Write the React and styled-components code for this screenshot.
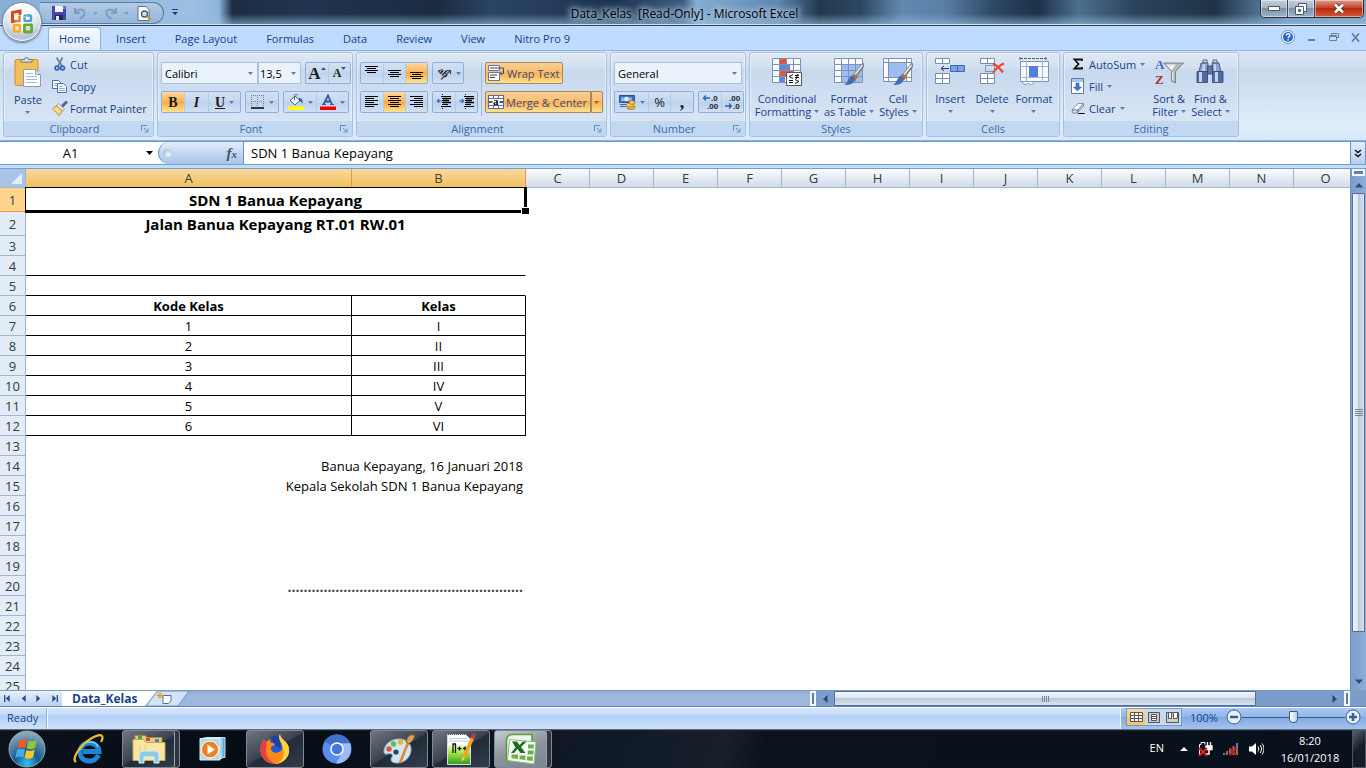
import React from 'react';
import styled, { createGlobalStyle } from 'styled-components';

const GlobalStyle = createGlobalStyle`
  * {
    box-sizing: border-box;
  }
  body {
    margin: 0;
    overflow: hidden;
  }
  button,
  input,
  select {
    margin: 0;
    padding: 0;
    border: 0;
    background: none;
    font: inherit;
    color: inherit;
    outline: none;
  }
  svg {
    display: block;
    flex: none;
  }
`;

const Desktop = styled.div`
  display: flex;
  flex-direction: column;
  height: 100vh;
  min-width: 0;
  background: #bfdbff;
  font-family: 'Open Sans', 'Noto Sans', sans-serif;
  font-size: 11px;
  line-height: 13px;
  color: #15428b;
`;

/* ---------- title bar ---------- */

const TitleBar = styled.header`
  position: relative;
  flex: none;
  display: flex;
  align-items: flex-start;
  justify-content: space-between;
  height: 26px;
  padding-left: 40px;
  border-bottom: 1px solid #33404f;
  box-shadow: inset 0 -1px 0 #cfe6f8;
  background:
    linear-gradient(rgba(190, 220, 245, 0) 55%, rgba(150, 190, 225, 0.65)),
    linear-gradient(
      90deg,
      #88b0d6 0,
      #9cc0e2 14%,
      #8fb6da 16%,
      #1c2c44 17%,
      #22344f 22%,
      #1b2b42 32%,
      #2b4464 36%,
      #1f3350 45%,
      #3d5c7f 50%,
      #86aed2 51%,
      #5f86ad 57%,
      #22384f 60%,
      #2d4763 63%,
      #6389b0 66%,
      #5b80a6 69%,
      #2b4562 73%,
      #1d3149 76%,
      #4d708f 79%,
      #2a435c 83%,
      #1f3347 89%,
      #6c93b8 94%,
      #7ba3c8
    );
`;

const OfficeButton = styled.button`
  position: absolute;
  top: 2px;
  left: 2px;
  z-index: 2;
  width: 40px;
  height: 40px;
  display: grid;
  place-items: center;
  border: 1px solid #7b8da5;
  border-radius: 50%;
  background: radial-gradient(circle at 50% 20%, #fff 20%, #dbe2ec 55%, #b5c3d6 75%, #eef3f9);
  box-shadow: inset 0 0 0 1px #fff, 0 1px 2px rgba(20, 40, 80, 0.5);
`;

const QuickAccess = styled.div`
  display: flex;
  align-items: center;
  gap: 3px;
  height: 22px;
  margin-top: 2px;
  padding: 0 7px 0 11px;
  border: 1px solid #5c7a9d;
  border-left: 0;
  border-radius: 0 11px 11px 0;
  background: linear-gradient(#b3cbe6, #93b5da);
`;

const QuickButton = styled.button`
  display: grid;
  place-items: center;
  width: ${(props) => props.$width || 16}px;
  height: ${(props) => props.$height || 18}px;
`;

const TitleSide = styled.div`
  flex: 1 1 0;
  display: flex;
  justify-content: ${(props) => (props.$end ? 'flex-end' : 'flex-start')};
  align-items: flex-start;
  gap: 3px;
`;

const WindowTitle = styled.h1`
  flex: none;
  margin: 0;
  padding: 7px 37px 0 0;
  font-size: 12px;
  font-weight: 400;
  line-height: 14px;
  white-space: pre;
  color: #000;
  text-shadow: 0 0 5px #a9c3dc, 0 0 6px #a9c3dc, 0 0 8px #a9c3dc, 0 0 10px #a9c3dc;
`;

const WindowButtons = styled.div`
  display: flex;
  height: 18px;
  margin-right: 2px;
  overflow: hidden;
  border: 1px solid #24323f;
  border-top: 0;
  border-radius: 0 0 5px 5px;
`;

const WindowButton = styled.button`
  display: grid;
  place-items: center;
  width: ${(props) => (props.$close ? 48 : 27)}px;
  border-right: ${(props) => (props.$close ? '0' : '1px solid #34475a')};
  box-shadow: inset 0 0 0 1px rgba(255, 255, 255, 0.45);
  background: ${(props) =>
    props.$close
      ? 'linear-gradient(#dd9c8e, #c6452c 45%, #b32a12 50%, #d65a35)'
      : 'linear-gradient(#c3cfdb, #a5b5c6 45%, #7d92a7 50%, #9db4ca)'};
`;

/* ---------- tabs ---------- */

const TabBar = styled.nav`
  flex: none;
  display: flex;
  align-items: flex-end;
  gap: 1px;
  height: 24px;
  padding-left: 48px;
  background: #bfdbff;
`;

const RibbonTab = styled.button`
  height: 23px;
  border: 1px solid ${(props) => (props.$active ? '#8db2e3' : 'transparent')};
  border-bottom: 0;
  border-radius: 3px 3px 0 0;
  font-size: 11px;
  color: #15428b;
  white-space: nowrap;
  background: ${(props) => (props.$active ? 'linear-gradient(#f5faff, #dfebf8)' : 'none')};

  && {
    padding: ${(props) => (props.$active ? '0 10px 2px' : '0 13px 2px')};
  }
`;

const TabBarEnd = styled.div`
  display: flex;
  align-items: center;
  align-self: center;
  gap: 12px;
  margin: 0 5px 2px auto;
`;

const IconButton = styled.button`
  display: grid;
  place-items: center;
`;

/* ---------- ribbon ---------- */

const Ribbon = styled.section`
  flex: none;
  display: flex;
  gap: 3px;
  height: 91px;
  padding: 1px 3px 3px;
  border: solid #8db2e3;
  border-width: 1px 0;
  background: linear-gradient(#dbe6f4 0, #cfdded 18%, #c9d9ed 20%, #e0edfb 85%, #d3e9fb);
`;

const GroupBox = styled.section`
  flex: none;
  display: flex;
  flex-direction: column;
  width: ${(props) => props.$width}px;
  border: 1px solid #a6c1e0;
  border-radius: 3px;
  box-shadow: inset 0 0 0 1px rgba(255, 255, 255, 0.45);
  background: linear-gradient(#dfe9f5 0, #d3e0f0 18%, #c8d8ed 20%, #dbe8f7);
`;

const GroupBody = styled.div`
  flex: 1;
  display: flex;
  gap: ${(props) => props.$gap || 0}px;
  padding: ${(props) => props.$pad || '9px 3px 0'};
`;

const GroupLabel = styled.div`
  display: flex;
  align-items: center;
  height: 15px;
  padding: 0 4px;
  border-radius: 0 0 2px 2px;
  background: #c1d8f0;
  color: #3e6aaa;

  h2 {
    flex: 1;
    margin: 0;
    font-size: 11px;
    font-weight: 400;
    text-align: center;
  }
`;

const Column = styled.div`
  display: flex;
  flex-direction: column;
  gap: ${(props) => props.$gap || 0}px;
`;

const Row = styled.div`
  display: flex;
  gap: 4px;
`;

const SelectPair = styled.div`
  display: flex;
`;

const Separator = styled.div`
  width: 2px;
  height: 54px;
  border-left: 1px solid #a0bce0;
  background: #eef5fc;
`;

const BigButton = styled.button`
  display: flex;
  flex-direction: column;
  align-items: center;
  width: ${(props) => props.$width}px;
  height: 66px;
  gap: 5px;
  text-align: center;
  white-space: nowrap;

  && {
    padding-top: 4px;
  }
`;

const BigLabel = styled.span`
  display: flex;
  flex-direction: column;
  align-items: center;
`;

const CaretLine = styled.span`
  display: flex;
  align-items: center;
  justify-content: center;
  gap: 3px;
  min-height: 13px;
`;

const SmallButton = styled.button`
  display: flex;
  align-items: center;
  gap: ${(props) => props.$gap || 4}px;
  height: 22px;
  white-space: nowrap;
`;

const EditList = styled.div`
  width: 79px;
`;

const ButtonGroup = styled.div`
  display: flex;
  height: 22px;
  border: 1px solid #8fb0dc;
  border-radius: 2px;
  background: linear-gradient(#d3e1f3, #c5d7ee 50%, #bdd1ec 50%, #d0e0f4);

  button + button {
    border-left: 1px solid #b4cbe7;
  }
`;

const ToolButton = styled.button`
  display: flex;
  align-items: center;
  justify-content: center;
  gap: 4px;
  width: ${(props) => props.$width || 22}px;
  white-space: nowrap;
  background: ${(props) =>
    props.$on ? 'linear-gradient(#fcd7a4, #fbb65b 45%, #fda93f 50%, #fee591)' : 'none'};
`;

const Superscript = styled.span`
  align-self: flex-start;
  margin: 3px 0 0 -4px;
`;

const ToggleButton = styled.button`
  display: flex;
  align-items: center;
  gap: 2px;
  height: 22px;
  border-radius: 2px;
  color: #3a4a80;
  white-space: nowrap;
  background: linear-gradient(#f8cd95, #fbc071 45%, #fbb04f 50%, #fee08f);

  && {
    padding: 0 3px 0 2px;
    border: 1px solid #a38a5c;
  }
`;

const ToggleSplit = styled.div`
  display: flex;

  button:first-child {
    border-radius: 2px 0 0 2px;
  }
  button:last-child {
    border-radius: 0 2px 2px 0;
  }
`;

const SelectBox = styled.label`
  position: relative;
  display: flex;
  align-items: center;
  width: ${(props) => props.$width}px;
  height: 22px;
  border: 1px solid #abc1de;
  background: #eaf2fb;
  color: #000;

  select {
    flex: 1;
    height: 20px;
    padding-left: ${(props) => (props.$tight ? 1 : 3)}px;
    appearance: none;
  }
  svg {
    position: absolute;
    right: 4px;
    pointer-events: none;
  }
`;

const Glyph = styled.span`
  font-family: 'Liberation Serif', serif;
  font-size: ${(props) => props.$size || 14}px;
  font-weight: 700;
  font-style: ${(props) => (props.$italic ? 'italic' : 'normal')};
  text-decoration: ${(props) => (props.$underline ? 'underline' : 'none')};
  color: #1b1b1b;
`;

const Percent = styled.span`
  font-size: 13px;
  color: #1b1b1b;
`;

/* ---------- formula bar ---------- */

const FormulaBar = styled.div`
  flex: none;
  display: flex;
  height: 24px;
  margin-bottom: 3px;
  border-top: 1px solid #6f94c4;
  border-bottom: 1px solid #7b9ebd;
  background: #fff;
  font-size: 13px;
  line-height: 20px;
  color: #000;
`;

const NameBox = styled.div`
  display: flex;
  align-items: center;
  width: 158px;

  input {
    flex: 1;
    min-width: 0;
    padding-left: 1px;
    text-align: center;
  }
  button {
    width: 18px;
    height: 20px;
    display: grid;
    place-items: center;
  }
`;

const FxArea = styled.div`
  display: flex;
  align-items: center;
  justify-content: space-between;
  width: 86px;
  padding: 0 6px 0 4px;
  border: 1px solid #6f94c4;
  border-width: 0 1px;
  border-radius: 11px 0 0 11px;
  background: linear-gradient(#e4eefb, #bcd2f0 60%, #a9c5ea);
`;

const Knob = styled.span`
  width: 9px;
  height: 9px;
  border-radius: 50%;
  background: radial-gradient(circle at 60% 60%, #f4f8fd, #94abc8);
`;

const FxButton = styled.button`
  font-family: 'Liberation Serif', serif;
  font-size: 15px;
  font-style: italic;
  font-weight: 700;
  color: #44546a;

  small {
    font-size: 11px;
  }
`;

const FormulaInput = styled.input`
  flex: 1;
  min-width: 0;

  && {
    padding-left: 7px;
  }
`;

const ExpandButton = styled.button`
  width: 16px;
  display: grid;
  place-items: center;

  && {
    border: 1px solid #6f94c4;
    border-width: 0 1px;
    background: linear-gradient(#e3edfb, #b5cdee);
  }
`;

/* ---------- sheet ---------- */

const SheetArea = styled.main`
  flex: 1;
  min-height: 0;
  display: flex;
  border-top: 1px solid #7b9ebd;
  background: #fff;
`;

const GridClip = styled.div`
  flex: 1;
  min-width: 0;
  overflow: hidden;
`;

const Grid = styled.table`
  width: 1358px;
  table-layout: fixed;
  border-collapse: separate;
  border-spacing: 0;
  font-size: 13px;
  line-height: 17px;
  color: #000;

  th,
  td {
    padding: 2px 0 0;
    font-weight: 400;
  }
`;

const Col = styled.col`
  width: ${(props) => props.$width}px;
`;

const CornerCell = styled.th`
  height: 19px;
  border-right: 1px solid #9eb6ce;
  border-bottom: 1px solid #9eb6ce;
  background: #a9c4e9;

  && {
    padding: 0;
  }
  svg {
    margin-left: auto;
  }
`;

const ColHead = styled.th`
  height: 19px;
  border-right: 1px solid ${(props) => (props.$on ? '#f29536' : '#9eb6ce')};
  border-bottom: 1px solid ${(props) => (props.$on ? '#c5923c' : '#9eb6ce')};
  background: ${(props) =>
    props.$on ? 'linear-gradient(#f9d99f, #f1c15f)' : 'linear-gradient(#f9fcfd, #d3dbe9)'};
  color: ${(props) => (props.$on ? '#40423a' : '#27413e')};

  && {
    padding: 1px 0 0;
  }
`;

const RowHead = styled.th`
  height: ${(props) => props.$height}px;
  border-right: 1px solid ${(props) => (props.$on ? '#f29536' : '#9eb6ce')};
  border-bottom: 1px solid ${(props) => (props.$on ? '#f29536' : '#9eb6ce')};
  background: ${(props) => (props.$on ? '#ffd58d' : '#e4ecf7')};
  color: #27413e;
`;

const Cell = styled.td`
  position: relative;
  border-right: 1px solid ${(props) => (props.$right ? '#000' : 'transparent')};
  border-bottom: 1px solid ${(props) => (props.$bottom ? '#000' : 'transparent')};
  text-align: ${(props) => props.$align || 'center'};
  white-space: nowrap;
  color: ${(props) => (props.$dots ? '#444' : '#000')};

  && {
    padding: 2px 2px 0;
    font-size: ${(props) => props.$size || 13}px;
    font-weight: ${(props) => (props.$bold ? 700 : 400)};
  }
`;

const Selection = styled.div`
  position: absolute;
  inset: -1px -2px -2px -1px;
  border: solid #000;
  border-width: 1px 3px 3px 1px;

  &::after {
    content: '';
    position: absolute;
    right: -5px;
    bottom: -4px;
    width: 7px;
    height: 6px;
    border: solid #fff;
    border-width: 1px 0 0 1px;
    background: #000;
  }
`;

/* ---------- scroll bars ---------- */

const VScroll = styled.div`
  flex: none;
  display: flex;
  flex-direction: column;
  width: 16px;
  padding: 0 1px;
  border-left: 1px solid #6f94c4;
  background: linear-gradient(90deg, #7c9cc9, #8dadd8);
`;

const VSplit = styled.div`
  height: 7px;
  border: 2px solid #f3f8fe;
  background: #5b7fae;
`;

const ScrollArrow = styled.button`
  display: grid;
  place-items: center;
  width: ${(props) => props.$width || 14}px;
  height: ${(props) => props.$height || 17}px;
`;

const Thumb = styled.div`
  display: grid;
  place-items: center;
  border: 1px solid #4f6f9f;
  border-radius: 1px;
  background: linear-gradient(
    ${(props) => (props.$vertical ? '90deg' : '180deg')},
    #f3f6fb,
    #dfe5ee 45%,
    #bcc8da 50%,
    #dbe3ef
  );
  flex: ${(props) => props.$grow} 1 0;
`;

const Track = styled.div`
  flex: ${(props) => props.$grow} 1 0;
`;

const SheetTabs = styled.div`
  flex: none;
  display: flex;
  height: 17px;
  border-top: 1px solid #7b9ebd;
  border-bottom: 1px solid #5f82b4;
  background: linear-gradient(#8fabd5, #9fb8dd 30%, #9db6dc);
`;

const TabNav = styled.div`
  display: flex;
  align-items: center;
  justify-content: space-around;
  width: 62px;
  background: linear-gradient(#e7f1fd, #b9d0ef);
`;

const SheetTab = styled.button`
  height: 15px;
  background: #fff;
  font-size: 12px;
  font-weight: 700;
  line-height: 15px;
  color: #15428b;

  && {
    padding: 0 6px 0 10px;
  }
`;

const HScroll = styled.div`
  display: flex;
  width: 556px;
  margin-left: auto;
  padding-right: 16px;
  background: #7c9cc9;
`;

const HSplit = styled.div`
  width: 6px;
  border: 2px solid #f3f8fe;
  background: #5b7fae;
`;

/* ---------- status bar ---------- */

const StatusBar = styled.footer`
  flex: none;
  display: flex;
  height: 22px;
  border-top: 1px solid #fff;
  background: linear-gradient(#d5e5fa 0, #c8dcf8 30%, #b0cef7 34%, #cfe1f9);
  color: #15428b;
`;

const ReadyText = styled.div`
  display: flex;
  align-items: center;
  width: 47px;
  padding: 0 0 3px 7px;
  border-right: 1px solid #8fb2e0;
  box-shadow: 1px 0 0 #f2f8ff;
`;

const ViewArea = styled.div`
  display: flex;
  align-items: center;
  gap: 8px;
  width: 246px;
  margin-left: auto;
  padding: 0 5px 3px;
  border-left: 1px solid #f2f8ff;
  background: linear-gradient(#a9c8f3 0, #94b8ea 40%, #82a9df 45%, #a3c4f2);
`;

const ViewButtons = styled.div`
  display: flex;
  border: 1px solid #7797c4;
`;

const ViewButton = styled.button`
  display: grid;
  place-items: center;
  width: 18px;
  height: 16px;
  background: ${(props) => (props.$on ? 'linear-gradient(#fdd79a, #fdc05c)' : '#c5d9f3')};
`;

const ZoomArea = styled.div`
  flex: 1;
  min-width: 0;
  display: flex;
  align-items: center;

  input {
    flex: 1;
    min-width: 0;
    height: 16px;
    appearance: none;
    background: linear-gradient(#3c5c8c, #3c5c8c) center / 100% 1px no-repeat;
  }
  input::-webkit-slider-thumb {
    appearance: none;
    width: 9px;
    height: 12px;
    border: 1px solid #3c5c8c;
    border-radius: 1px 1px 4px 4px;
    background: linear-gradient(90deg, #fff, #b9cde8);
  }
`;

/* ---------- task bar ---------- */

const Taskbar = styled.div`
  flex: none;
  display: flex;
  align-items: stretch;
  height: 39px;
  border-top: 1px solid #5d6a78;
  box-shadow: inset 0 1px 0 #1a232e;
  background: linear-gradient(
    100deg,
    #0b121c 0,
    #060c14 20%,
    #101a26 45%,
    #161f2a 53%,
    #0a121d 56%,
    #07101b 100%
  );
  color: #fff;
`;

const StartButton = styled.button`
  width: 54px;
  display: grid;
  place-items: center;
`;

const TaskList = styled.div`
  display: flex;
  gap: 4px;
  margin-left: 6px;
`;

const TaskButton = styled.button`
  display: grid;
  place-items: center;
  width: 58px;
  border-radius: 3px;
  border: 1px solid ${(props) => (props.$open ? '#7f8994' : 'transparent')};
  background: ${(props) => {
    if (props.$active) return 'linear-gradient(160deg, #c5cbd2, #8b939d 50%, #7a828d)';
    return props.$open ? 'linear-gradient(150deg, #6e7681, #3a434f 48%, #222b38 52%, #333d4b)' : 'none';
  }};
  box-shadow: ${(props) =>
    props.$stacked ? 'inset -4px 0 0 #2c3540, inset -5px 0 0 #9aa3ad' : 'none'};

  && {
    padding-right: ${(props) => (props.$stacked ? 5 : 0)}px;
  }
`;

const Tray = styled.div`
  display: flex;
  align-items: center;
  gap: 10px;
  margin-left: auto;
  font-size: 11px;
`;

const Language = styled.span`
  padding-bottom: 4px;
  margin-right: 6px;
`;

const Clock = styled.time`
  width: 64px;
  margin-left: 4px;
  line-height: 17px;
  text-align: center;
`;

const ShowDesktop = styled.button`
  width: 14px;
  height: 38px;
  border: 1px solid #4b5560;
  background: linear-gradient(135deg, #56606b, #161d27 50%);
`;

/* ---------- icons ---------- */

const Caret = ({ color = '#5a7fb5' }) => (
  <svg width="5" height="3" viewBox="0 0 5 3">
    <path d="M0 0h5L2.5 3z" fill={color} />
  </svg>
);

const Arrow = ({ dir, color = '#2b4a80', size = 8, bar = false }) => {
  const turn = { left: 0, up: 90, right: 180, down: 270 }[dir];
  return (
    <svg width={size} height={size} viewBox="0 0 8 8">
      <g transform={`rotate(${turn} 4 4)`} fill={color}>
        <path d="M6.5 0v8L2 4z" />
        {bar && <path d="M0 0h1.5v8H0z" />}
      </g>
    </svg>
  );
};

const OfficeLogo = () => (
  <svg width="26" height="26" viewBox="0 0 26 26" fill="none">
    <path d="M8 12.500H3.500V3.500L11 2v4" stroke="#d9471b" strokeWidth="3" />
    <path d="M10.500 6.500v5.500H6" stroke="#ee7a33" strokeWidth="2.500" />
    <rect x="15.500" y="6.500" width="6.500" height="5.500" rx="1" stroke="#4b9fd8" strokeWidth="2.400" />
    <path d="M14.500 8.500l4-2" stroke="#9fd0f2" strokeWidth="1.200" />
    <rect x="5" y="16" width="6" height="6.500" rx="1" stroke="#f2b01e" strokeWidth="2.600" />
    <rect x="15.500" y="15.500" width="7" height="7.500" rx="1" stroke="#6aa83a" strokeWidth="3" />
    <path d="M16 19h6" stroke="#b6dc8c" strokeWidth="1" />
    <path d="M13 5v17M5 14h17" stroke="#fff" strokeWidth="1" />
  </svg>
);

const SaveIcon = () => (
  <svg width="14" height="14" viewBox="0 0 14 14">
    <path d="M0 0h13l1 1v13H0z" fill="#4747a8" />
    <path d="M3 0h8v6H3z" fill="#f1f4fb" />
    <path d="M11 1h2v2h-2z" fill="#8f8fe0" />
    <path d="M3 9h8v5H3z" fill="#23235e" />
    <path d="M4 10h3v4H4z" fill="#e6e9f5" />
  </svg>
);

const UndoIcon = ({ flip }) => (
  <svg width="14" height="14" viewBox="0 0 14 14">
    <g transform={flip ? 'translate(14 0) scale(-1 1)' : undefined} fill="none" stroke="#7f9cc4">
      <path d="M2 2v5h5" strokeWidth="2" />
      <path d="M2.500 6.500C6 2 12 3 11.500 7.500 11 10.500 8 12 6.500 12.500" strokeWidth="2" />
    </g>
  </svg>
);

const PreviewIcon = () => (
  <svg width="15" height="15" viewBox="0 0 15 15">
    <path d="M1 .5h8l3 3v11H1z" fill="#fff" stroke="#5e6f88" />
    <circle cx="7.500" cy="8" r="3" fill="#cfe5f8" stroke="#46586f" strokeWidth="1.300" />
    <path d="M10 10.500l4 3.500" stroke="#d9901c" strokeWidth="2" />
  </svg>
);

const MoreIcon = () => (
  <svg width="6" height="7" viewBox="0 0 6 7">
    <path d="M0 0h6v1H0zM0 3h6L3 6z" fill="#1b3d7a" />
  </svg>
);

const HelpIcon = () => (
  <svg width="14" height="14" viewBox="0 0 14 14">
    <circle cx="7" cy="7" r="6.500" fill="#fff" stroke="#6f8fc0" />
    <circle cx="7" cy="7" r="5" fill="#2a62d4" />
    <path
      d="M5.200 5.500c0-2.300 3.700-2.200 3.700 0 0 1.300-1.800 1.300-1.800 2.700M7.100 9.200v1.400"
      stroke="#fff"
      strokeWidth="1.400"
      fill="none"
    />
  </svg>
);

const LauncherIcon = () => (
  <svg width="8" height="8" viewBox="0 0 8 8" fill="none" stroke="#6a8cba">
    <path d="M.5 6V.5H6" />
    <path d="M3 3l3 3M7 3.500V7H3.500" />
  </svg>
);

const PasteIcon = () => (
  <svg width="28" height="31" viewBox="0 0 28 31">
    <rect x="1" y="2.500" width="23" height="26" rx="1.500" fill="#f3bf5a" stroke="#c98f2c" />
    <path d="M7 5V2.500h3.500a2 2 0 0 1 4 0H18V5z" fill="#dfe3e8" stroke="#6d7682" />
    <path d="M9.500 12.500h12l5 5v12h-17z" fill="#fdfeff" stroke="#8a9cb8" />
    <path d="M21.500 12.500v5h5" fill="#d9e4f3" stroke="#8a9cb8" />
    <path d="M12 16.500h7M12 19.500h11M12 22.500h11M12 25.500h11" stroke="#a7b9d4" />
  </svg>
);

const CutIcon = () => (
  <svg width="16" height="16" viewBox="0 0 16 16" fill="none">
    <path d="M4.500 1.500L10 10M10.500 1.500L6 10" stroke="#6b7d9b" strokeWidth="1.700" />
    <circle cx="5" cy="12" r="1.900" stroke="#2f62b5" strokeWidth="1.700" />
    <circle cx="10.500" cy="12" r="1.900" stroke="#2f62b5" strokeWidth="1.700" />
  </svg>
);

const CopyIcon = () => (
  <svg width="16" height="16" viewBox="0 0 16 16" stroke="#4a73b5" fill="#fff">
    <path d="M.5 2.500h6l2 2v6h-8z" />
    <path d="M2 5.500h4M2 7.500h4" stroke="#8fb0dd" />
    <path d="M5.500 5.500h6l3 3v6h-9z" />
    <path d="M7 8.500h4M7 10.500h6M7 12.500h6" stroke="#8fb0dd" />
  </svg>
);

const PainterIcon = () => (
  <svg width="16" height="16" viewBox="0 0 16 16">
    <path d="M15 1.500L10 6.500" stroke="#5b5f9c" strokeWidth="3" />
    <path d="M6.500 3.500l6 5.500-2 2-6-5.300z" fill="#eceef3" stroke="#7b8394" strokeWidth=".7" />
    <path d="M4.500 6l6 5-3.500 4.500L.5 8.500z" fill="#f3cf5b" stroke="#a67c22" strokeWidth=".7" />
    <path d="M2.500 8.500l4.500 4M4 7.500l4.500 4" stroke="#fff3bf" />
  </svg>
);

const BorderIcon = () => (
  <svg width="14" height="14" viewBox="0 0 14 14" fill="none" stroke="#6c7f99" strokeDasharray="1 1">
    <path d="M.5 0v12M6.500 0v12M12.500 0v12M0 .5h13M0 6.500h13" />
    <path d="M0 13h13" stroke="#000" strokeDasharray="none" strokeWidth="1.500" />
  </svg>
);

const FillColorIcon = () => (
  <svg width="16" height="16" viewBox="0 0 16 16">
    <path d="M2 6.500L7 2l5 4.500-5 4.500z" fill="#eef3fa" stroke="#53637d" />
    <path d="M6.500 6V1.500a1.500 1.500 0 0 1 3 0" fill="none" stroke="#53637d" />
    <path d="M11 4c3 0 4 2 3.500 6-1-2-2-3-3.500-3z" fill="#2f5fb0" />
    <path d="M0 12.500h16V16H0z" fill="#ff0" />
  </svg>
);

const FontColorIcon = () => (
  <svg width="16" height="16" viewBox="0 0 16 16">
    <path d="M3.500 10.500L8 1.500l4 9M5.500 7.500h5" fill="none" stroke="#37559a" strokeWidth="1.800" />
    <path d="M2 10.500h4M10 10.500h4" stroke="#37559a" />
    <path d="M0 12.500h16V16H0z" fill="#f00000" />
  </svg>
);

const linePatterns = {
  top: [[1, 14, 1], [3, 12, 3], [1, 14, 5], [3, 12, 7]],
  middle: [[1, 14, 5], [3, 12, 7], [1, 14, 9], [3, 12, 11]],
  bottom: [[1, 14, 7], [3, 12, 9], [1, 14, 11], [3, 12, 13]],
  left: [[1, 14, 2], [1, 10, 4], [1, 14, 6], [1, 10, 8], [1, 14, 10], [1, 10, 12]],
  center: [[1, 14, 2], [3, 12, 4], [1, 14, 6], [3, 12, 8], [1, 14, 10], [3, 12, 12]],
  right: [[1, 14, 2], [5, 14, 4], [1, 14, 6], [5, 14, 8], [1, 14, 10], [5, 14, 12]],
  indent: [[5, 15, 2], [7, 15, 4], [7, 13, 6], [7, 15, 8], [7, 12, 10], [5, 15, 12]],
};

const LinesIcon = ({ kind, shift }) => (
  <svg width="16" height="16" viewBox="0 0 16 16">
    {linePatterns[kind].map(([from, to, y]) => (
      <path key={y} d={`M${from} ${y + 0.5}H${to}`} stroke="#000" strokeWidth={shift && y > 3 && y < 9 ? 1.5 : 1} />
    ))}
    {shift && <path d="M6.500 0v16" stroke="#000" strokeDasharray="1 1" />}
    {shift === 'out' && <path d="M3 5L.8 7 3 9zM2 7h4" fill="#3a70c8" stroke="#3a70c8" />}
    {shift === 'in' && <path d="M3 5l2.200 2L3 9zM0 7h4" fill="#3a70c8" stroke="#3a70c8" />}
  </svg>
);

const OrientationIcon = () => (
  <svg width="16" height="16" viewBox="0 0 16 16" overflow="visible">
    <text
      x="1"
      y="9"
      fontSize="10"
      fontWeight="700"
      fontFamily="Liberation Serif"
      transform="rotate(45 5 8)"
      fill="#222"
    >
      ab
    </text>
    <path d="M5 14.500L14.500 5.500M11 5.500h3.500V9" fill="none" stroke="#444" strokeWidth="1.200" />
  </svg>
);

const WrapIcon = () => (
  <svg width="17" height="16" viewBox="0 0 17 16">
    <path d="M.5.5h11v5H.5zM.5 7.500h11v8H.5z" fill="#fff" stroke="#5d79a8" />
    <path d="M2 3h11M2 10h7M2 12.500h5" stroke="#444" strokeWidth="1.200" />
    <path d="M13 3h2.500v5.500h-3M14 6.500l-2 2 2 2" fill="none" stroke="#35507f" />
  </svg>
);

const MergeIcon = () => (
  <svg width="16" height="16" viewBox="0 0 16 16">
    <path d="M.5 1.500h15v13H.5z" fill="#fff" stroke="#4d6ea8" />
    <path d="M5.500 1v3M10.500 1v3M5.500 12v3M10.500 12v3M0 4.500h16M0 11.500h16" stroke="#4d6ea8" />
    <path d="M1 8h3.500M11.500 8H15" stroke="#222" strokeWidth="1.500" />
    <text x="5" y="10.500" fontSize="11" fontWeight="700" fontFamily="Liberation Serif" fill="#000">
      a
    </text>
  </svg>
);

const MoneyIcon = () => (
  <svg width="17" height="16" viewBox="0 0 17 16">
    <path d="M.5 1.500h15v7H.5z" fill="#3f6fc0" stroke="#2b5292" />
    <path d="M2 3.500h11v3.500H2z" fill="#8fb4ea" />
    <circle cx="7.500" cy="5" r="2.300" fill="#e3edfa" />
    <path d="M1 10h8v1H1zM1 12h6v1H1z" fill="#3e66a8" />
    <ellipse cx="12" cy="13.500" rx="4" ry="2" fill="#f1b62c" stroke="#9b6a12" strokeWidth=".7" />
    <ellipse cx="11" cy="11" rx="4" ry="2" fill="#fbd05a" stroke="#9b6a12" strokeWidth=".7" />
    <ellipse cx="13" cy="8.500" rx="3" ry="1.800" fill="#fbd05a" stroke="#9b6a12" strokeWidth=".7" />
  </svg>
);

const DecimalIcon = ({ less }) => (
  <svg width="17" height="16" viewBox="0 0 17 16" fontFamily="Liberation Sans" fontSize="8" fontWeight="700">
    <text x={less ? 5 : 9} y="7" fill="#222">
      {less ? '.00' : '.0'}
    </text>
    <text x={less ? 9 : 5} y="15" fill="#222">
      {less ? '.0' : '.00'}
    </text>
    {less ? (
      <path d="M1 12h6M5 9.500L7.500 12 5 14.500" fill="none" stroke="#2f62c0" strokeWidth="1.300" />
    ) : (
      <path d="M8 4H2M4 1.500L1.500 4 4 6.500" fill="none" stroke="#2f62c0" strokeWidth="1.300" />
    )}
  </svg>
);

const GridLines = ({ w, h, stepX, stepY }) => {
  const d = [];
  for (let x = 0; x <= w; x += stepX) d.push(`M${x + 0.5} .5v${h}`);
  for (let y = 0; y <= h; y += stepY) d.push(`M.5 ${y + 0.5}h${w}`);
  return <path d={d.join('')} fill="none" stroke="#7e92b2" />;
};

const ConditionalIcon = () => (
  <svg width="30" height="30" viewBox="0 0 30 30">
    <path d="M0 1h28v24H0z" fill="#f8fafd" />
    <path d="M7 1h7v6H7zM7 13h14v6H7z" fill="#e8543a" />
    <path d="M7 7h11v6H7zM7 19h6v6H7z" fill="#5b87dd" />
    <g transform="translate(0 1)">
      <GridLines w={28} h={24} stepX={7} stepY={6} />
    </g>
    <path d="M14.500 15.500h15v13h-15z" fill="#fff" stroke="#555" />
    <path
      d="M21 17.500l-4 2 4 2M17 23.500h4M17 25.500h4M23 18.500h4M23 20.500h4M26 17l-2 5M23 22.500l4 2-4 2"
      fill="none"
      stroke="#111"
    />
  </svg>
);

const Brush = () => (
  <g>
    <path d="M29 8L20 20" stroke="#7c818c" strokeWidth="4" strokeLinecap="round" />
    <path d="M28.500 8L19.500 19.500" stroke="#e9ecf1" strokeWidth="1.500" />
    <path d="M20 16.500l4 3.500-3 3.500-4.500-4z" fill="#b9722a" />
    <path d="M17 19c3 0 4.500 2 3.500 4.500-2 4-6 4.500-10.500 4.500 4-2 4-7 7-9z" fill="#3f6cb8" />
  </g>
);

const FormatTableIcon = () => (
  <svg width="30" height="30" viewBox="0 0 30 30">
    <path d="M0 1h28v24H0z" fill="#f8fafd" />
    <path d="M7 7h21v18H7z" fill="#9dbcf3" />
    <g transform="translate(0 1)">
      <GridLines w={28} h={24} stepX={7} stepY={6} />
    </g>
    <Brush />
  </svg>
);

const CellStylesIcon = () => (
  <svg width="30" height="30" viewBox="0 0 30 30">
    <path d="M.5 1.500h28v23H.5z" fill="#f8fafd" stroke="#7e92b2" />
    <path d="M5.500 1v24M23.500 1v24M0 5.500h28M0 20.500h28" stroke="#7e92b2" />
    <path d="M6 6h17v14H6z" fill="#9dbcf3" />
    <Brush />
  </svg>
);

const InsertCellsIcon = () => (
  <svg width="30" height="30" viewBox="0 0 30 30" fill="#fff" stroke="#7e8da6">
    <path d="M.5 1.500h14v5H.5zM7.500 1.500v5M.5 16.500h14v10H.500zM7.500 16.500v10M.5 21.500h14" />
    <path d="M15.500 8.500h14v6h-14z" fill="#7da3ea" stroke="#3f66b3" />
    <path d="M22.500 8.500v6" stroke="#3f66b3" />
    <path d="M14 11.500H6M9 9l-3 2.500L9 14" fill="none" stroke="#2a3a55" />
  </svg>
);

const DeleteCellsIcon = () => (
  <svg width="30" height="30" viewBox="0 0 30 30" fill="#fff" stroke="#7e8da6">
    <path d="M3.500 1.500h14v5h-14zM10.500 1.500v5M3.500 16.500h14v10h-14zM10.500 16.500v10M3.500 21.500h14" />
    <path d="M8.500 8.500h9v6h-9z" fill="none" stroke="#2f4f93" strokeDasharray="1 1" />
    <path d="M16 6.500c4 2 7 5 10 9M27 6.500c-5 2-8 5-11 9.500" stroke="#ea4a35" strokeWidth="2.200" fill="none" />
  </svg>
);

const FormatCellsIcon = () => (
  <svg width="30" height="30" viewBox="0 0 30 30">
    <path d="M1 1.500h26M1 0v4M27 0v4" stroke="#4c5d7b" strokeDasharray="3 1" />
    <path d="M1.500 4.500h28v20h-28z" fill="#f8fafd" stroke="#7e92b2" />
    <path d="M7.500 4v21M23.500 4v21M1 9.500h28M1 20.500h28" stroke="#a6b5cc" />
    <path d="M10 9h9v11h-9z" fill="#4f7de0" />
    <path d="M3 25c1 3 5 3 6 1 2 2 5 2 6-1" fill="#fff" stroke="#7e92b2" />
  </svg>
);

const SigmaIcon = () => (
  <svg width="14" height="14" viewBox="0 0 14 14">
    <path d="M11 4V2.500H3.500L7.500 7l-4 4.500H11V10" fill="none" stroke="#111" strokeWidth="1.800" />
  </svg>
);

const FillIcon = () => (
  <svg width="14" height="16" viewBox="0 0 14 16">
    <path d="M.5.5h12v15H.5z" fill="#fff" stroke="#5d79a8" />
    <path d="M1 1h11v3H1z" fill="#a9c4ee" />
    <path d="M5 5h3v4h2.500l-4 4-4-4H5z" fill="#3f76dc" stroke="#2a55ad" strokeWidth=".6" />
  </svg>
);

const ClearIcon = () => (
  <svg width="14" height="14" viewBox="0 0 14 14">
    <path d="M1 9l6-6.500h5.500L7 9z" fill="#fff" stroke="#6d7c96" strokeWidth=".8" />
    <path d="M1 9h6l-1 3H1.500zM7 9l5.500-6.500v3L6 12z" fill="#cfd9e8" stroke="#6d7c96" strokeWidth=".8" />
    <path d="M7 12.500h6.500" stroke="#000" />
  </svg>
);

const SortIcon = () => (
  <svg width="30" height="30" viewBox="0 0 30 30" fontFamily="Liberation Serif" fontWeight="700">
    <text x="1" y="12" fontSize="13" fill="#3b62b8">
      A
    </text>
    <text x="1" y="27" fontSize="13" fill="#a8352f">
      Z
    </text>
    <path d="M9.500 6h20l-8 8.500V26l-4-2v-9.500z" fill="#b4b7bb" stroke="#6f7278" strokeWidth=".8" />
    <path d="M12 7.500h10l-4.500 6z" fill="#eceef0" />
    <path d="M18 15h1.500v9l-1.500-.7z" fill="#e4e6e8" />
  </svg>
);

const FindIcon = () => (
  <svg width="30" height="30" viewBox="0 0 30 30" stroke="#33486e" strokeWidth=".8">
    <path d="M8 3h4v3H8zM18 3h4v3h-4z" fill="#d5deec" />
    <path d="M6 6h7v9H4zM17 6h7l2 9h-9z" fill="#8ba3cc" />
    <path d="M12.500 9h5v8h-5z" fill="#5a76a8" />
    <path d="M2 14.500h10.500v11H2zM17.500 14.500H28v11H17.500z" fill="#4c6aa5" />
    <path d="M4 15h3v10H4zM20 15h3v10h-3zM8 7h2v7H7zM19 7h2v7h-2z" fill="#c4d2ea" stroke="none" />
  </svg>
);

const StartOrb = () => (
  <svg width="38" height="38" viewBox="0 0 38 38">
    <defs>
      <radialGradient id="orb" cx=".5" cy=".9" r=".85">
        <stop offset="0" stopColor="#35c4ee" />
        <stop offset=".4" stopColor="#155a92" />
        <stop offset="1" stopColor="#8fa9ba" />
      </radialGradient>
    </defs>
    <circle cx="19" cy="19" r="18" fill="url(#orb)" stroke="#8da8b8" />
    <path d="M11 10.500c3-2 5-1.500 8-.5L17.300 18c-2.800-1-5-1.300-8 .5z" fill="#ee5a24" />
    <path d="M20.500 10.500c3 1.200 5.500 1.200 8.500-.5L27 18c-3 1.500-5.500 1.500-8.300.5z" fill="#8cc63f" />
    <path d="M9 20c3-2 5-1.500 8-.5L15.300 27.500c-3-1-5-1.300-8 .5z" fill="#4aa7e8" />
    <path d="M18.300 20c3 1.200 5.500 1.200 8.500-.5L25 27.500c-3 1.500-5.500 1.500-8.300.5z" fill="#fdc81e" />
  </svg>
);

const InternetExplorerIcon = () => (
  <svg width="34" height="32" viewBox="0 0 34 32" fill="none">
    <path d="M26.500 22c-2 4-5 6-9 6-6 0-9.500-4-9.500-9s4-9 9.500-9 9.500 4 9.500 8.500H11" stroke="#1f86d6" strokeWidth="5" />
    <path d="M8 17c1-5 5-8 10-8 4 0 7 2 8 5" stroke="#7fd0f8" strokeWidth="1.500" />
    <path d="M4 29C-1 26 8 12 20 5c9-5 13-3 9 4" stroke="#f2bd2d" strokeWidth="2.200" />
  </svg>
);

const FolderIcon = () => (
  <svg width="34" height="30" viewBox="0 0 34 30">
    <path d="M3 1.500h10l2 2h15v22H3z" fill="#e9cc72" stroke="#a98732" />
    <path d="M6 2h4v3H6z" fill="#3aa65a" />
    <path d="M14 4h4v3h-4z" fill="#d0463c" />
    <path d="M23 5h4v3h-4z" fill="#3e85d5" />
    <path d="M1 5.500h11l2 3h19v18H1z" fill="#f8e6a2" stroke="#c9a74e" />
    <path d="M8 11v14M13 11v14" stroke="#ead289" />
    <path d="M7 29v-8c0-3 2-4 5-4h10c3 0 5 1 5 4v8h-5v-6H12v6z" fill="#8fcbe9" stroke="#d8f1fc" />
  </svg>
);

const MediaIcon = () => (
  <svg width="28" height="28" viewBox="0 0 28 28">
    <path d="M7 2.500h19v20H7z" fill="#5aa7cf" stroke="#bfe2f2" />
    <path d="M4 3h19v20.500H4z" fill="#7fc0dd" stroke="#bfe2f2" />
    <path d="M1 3.500h20V25H1z" fill="#b4d9e8" stroke="#e0f2f9" />
    <circle cx="11" cy="14.500" r="8.500" fill="#f07f22" stroke="#fff" />
    <path d="M8.500 9.500v10l7.500-5z" fill="#fff" />
  </svg>
);

const FirefoxIcon = () => (
  <svg width="32" height="32" viewBox="0 0 32 32">
    <circle cx="16" cy="16" r="10" fill="#2456cf" />
    <path d="M12 4c3-2 8-1 10 2l-1 9-6-4z" fill="#1f3f9f" />
    <path
      d="M21 1c0 4 5 6 8 11 4 9-3 18-12 19C8 31 1 25 1.500 16c0-4 2-8 3.500-10l2 3 4-3c0 3 1 4 3 4l2 1c-1 2-4 2-4 4 0 4 4 6 8 4 3-1 4-4 3-7-1-5-4-7-2-11z"
      fill="#ff8a1c"
    />
    <path d="M21 1c0 4 5 6 8 11 4 9-3 18-12 19 7-3 9-9 7-16-1-6-6-9-3-14z" fill="#ffd43a" />
    <path d="M1.500 16c0 8 6 15 15.500 15-6-2-10-7-10-13l.500-9L5 6c-2 3-3.500 6-3.500 10z" fill="#e83a4a" />
  </svg>
);

const ChromiumIcon = () => (
  <svg width="30" height="30" viewBox="0 0 30 30">
    <circle cx="15" cy="15" r="14.500" fill="#5b8def" />
    <path d="M15 15L2.500 7.500C8-2 23-2 28 9H15z" fill="#3f6fc9" />
    <path d="M20.500 18L14 29.500C24 30 31 21 28.500 9.500H15z" fill="#9dbcf5" />
    <circle cx="15" cy="15" r="6.800" fill="#fff" />
    <circle cx="15" cy="15" r="5.300" fill="#4678d6" />
  </svg>
);

const PaintIcon = () => (
  <svg width="34" height="32" viewBox="0 0 34 32">
    <path
      d="M15 6c9-1 15 5 14 12s-7 12-14 12c-6 0-7-3-5-6s-2-4-5-3-4-3-2-7 6-7 12-8z"
      fill="#cfe5f3"
      stroke="#8db1c9"
    />
    <circle cx="7" cy="16" r="2.700" fill="#e0503c" />
    <circle cx="11.500" cy="11" r="2.700" fill="#68b94a" />
    <circle cx="18.500" cy="9" r="2.700" fill="#efb32e" />
    <circle cx="14" cy="19" r="2.600" fill="#29445d" />
    <path d="M18 30l8-20" stroke="#e3872b" strokeWidth="2.600" />
    <path d="M24 9l1-3c1-3 4-5 7-4 1 2 0 4-2 6l-3 3z" fill="#d9a066" stroke="#8e5b2c" />
  </svg>
);

const NotepadIcon = () => (
  <svg width="32" height="34" viewBox="0 0 32 34">
    <defs>
      <linearGradient id="pad" x2="0" y2="1">
        <stop offset=".3" stopColor="#fff" />
        <stop offset=".6" stopColor="#a8e84a" />
        <stop offset="1" stopColor="#2f9a18" />
      </linearGradient>
    </defs>
    <path d="M2.500 2.500h18l5 5v25h-23z" fill="url(#pad)" stroke="#d8dcd8" />
    <path d="M3 2h18" stroke="#555" strokeWidth="2" strokeDasharray="1 1" />
    <path d="M4 6.500h18M4 9h20" stroke="#b5cfe8" />
    <path
      d="M8 21V12h2.500v9M12.500 16.500h4M14.500 14.500v4M18 16.500h4M20 14.500v4"
      stroke="#111"
      strokeWidth="1.300"
      fill="none"
    />
    <path d="M18.500 26L28 5" stroke="#f0a41e" strokeWidth="3.500" />
    <path d="M27.300 6.500L29.500 2" stroke="#c0404a" strokeWidth="3.500" />
    <path d="M17 25l3 1.500-3.500 3z" fill="#e8cfa0" />
  </svg>
);

const ExcelIcon = () => (
  <svg width="34" height="32" viewBox="0 0 34 32">
    <path d="M2.500 8c0-4 2-6.500 6-6.500h19.500V27l-25.500 1z" fill="#eef6e9" stroke="#5ba03c" strokeWidth="1.600" />
    <path d="M5.500 6.500l26.500 2.500L30 31 3.500 27.500z" fill="#f5faf2" stroke="#8cbf75" />
    <path
      d="M24 11.500h6l-.3 4H24zM23.700 17.500h6l-.3 4h-5.700zM23 23.500h6l-.4 4.500-5.600-.7zM15.500 22.500h6v4.500l-6-.7zM7.500 21.500h6.500v4.500l-6.500-.7z"
      fill="#6dae56"
    />
    <path d="M8 8.500h5l2.500 3.500L19 8.500h3.500L17 14l4.500 6h-5L13.500 16 10 20H7l4.500-5.500z" fill="#1f6b24" />
  </svg>
);

const PowerIcon = () => (
  <svg width="15" height="16" viewBox="0 0 15 16">
    <path d="M1.500 14V3.500H3V1.500h4v2" fill="none" stroke="#fff" />
    <path d="M8 5h6v3.500H8zM9.500 1v4M12.500 1v4" stroke="#fff" strokeWidth="1.300" fill="#fff" />
    <path d="M11 8v5H8" stroke="#fff" strokeWidth="1.500" fill="none" />
    <path d="M1 7l8 8M9 7l-8 8" stroke="#e01b1b" strokeWidth="2.200" />
  </svg>
);

const SignalIcon = () => (
  <svg width="16" height="14" viewBox="0 0 16 14">
    <path d="M0 11h2v2H0zM3 9h2v4H3zM6 7h2v6H6zM9.500 4h2v9h-2zM13 1h2v12h-2z" fill="#777b80" />
    <path d="M6.500 6l7 7M13.500 6l-7 7" stroke="#d01b1b" strokeWidth="2.200" />
  </svg>
);

const SpeakerIcon = () => (
  <svg width="15" height="14" viewBox="0 0 15 14">
    <path d="M0 4.500h3L7 1v12L3 9.500H0z" fill="#fff" />
    <path d="M9 4.500c1 1.500 1 3.500 0 5M11 3c2 2.500 2 5.500 0 8M13 1.500c2.500 3.500 2.500 7.500 0 11" fill="none" stroke="#fff" />
  </svg>
);

/* ---------- data ---------- */

const TABS = ['Home', 'Insert', 'Page Layout', 'Formulas', 'Data', 'Review', 'View', 'Nitro Pro 9'];
const COLUMNS = 'ABCDEFGHIJKLMNO'.split('');
const ROWS = Array.from({ length: 25 }, (_, i) => i + 1);
const KELAS = {
  6: ['Kode Kelas', 'Kelas'],
  7: ['1', 'I'],
  8: ['2', 'II'],
  9: ['3', 'III'],
  10: ['4', 'IV'],
  11: ['5', 'V'],
  12: ['6', 'VI'],
};
const MERGED = {
  1: { text: 'SDN 1 Banua Kepayang', size: 15, bold: true },
  2: { text: 'Jalan Banua Kepayang RT.01 RW.01', size: 15, bold: true },
  4: { text: '', bottom: true },
  5: { text: '', bottom: true },
  14: { text: 'Banua Kepayang, 16 Januari 2018', align: 'right' },
  15: { text: 'Kepala Sekolah SDN 1 Banua Kepayang', align: 'right' },
  20: { text: '.'.repeat(59), size: 14, align: 'right', bold: true, dots: true },
};

const TASKS = [
  { name: 'Internet Explorer', icon: InternetExplorerIcon },
  { name: 'Windows Explorer', icon: FolderIcon, open: true, stacked: true },
  { name: 'Media Player', icon: MediaIcon },
  { name: 'Firefox', icon: FirefoxIcon, open: true },
  { name: 'Chromium', icon: ChromiumIcon },
  { name: 'Paint', icon: PaintIcon, open: true },
  { name: 'Notepad++', icon: NotepadIcon, open: true },
  { name: 'Excel', icon: ExcelIcon, open: true, active: true, stacked: true },
];

/* ---------- parts ---------- */

const Group = ({ title, width, launcher, children, ...body }) => (
  <GroupBox $width={width}>
    <GroupBody {...body}>{children}</GroupBody>
    <GroupLabel>
      <h2>{title}</h2>
      {launcher && (
        <IconButton aria-label={`${title} options`}>
          <LauncherIcon />
        </IconButton>
      )}
    </GroupLabel>
  </GroupBox>
);

const Big = ({ icon: Icon, lines, width, caretBelow }) => (
  <BigButton $width={width}>
    <Icon />
    <BigLabel>
      {lines.map((line, index) => (
        <CaretLine key={line}>
          {line}
          {!caretBelow && index === lines.length - 1 && <Caret />}
        </CaretLine>
      ))}
      {caretBelow && (
        <CaretLine>
          <Caret />
        </CaretLine>
      )}
    </BigLabel>
  </BigButton>
);

const Small = ({ icon: Icon, text, caret, gap }) => (
  <SmallButton $gap={gap}>
    <Icon />
    {text}
    {caret && <Caret />}
  </SmallButton>
);

const Select = ({ label, value, width, tight }) => (
  <SelectBox $width={width} $tight={tight}>
    <select aria-label={label}>
      <option>{value}</option>
    </select>
    <Caret />
  </SelectBox>
);

const RibbonGroups = () => (
  <Ribbon>
    <Group title="Clipboard" width={151} launcher $pad="0 2px" $gap={2}>
      <Big icon={PasteIcon} lines={['Paste']} width={44} caretBelow />
      <Column>
        <Small icon={CutIcon} text="Cut" gap={2} />
        <Small icon={CopyIcon} text="Copy" gap={2} />
        <Small icon={PainterIcon} text="Format Painter" gap={2} />
      </Column>
    </Group>
    <Group title="Font" width={196} launcher>
      <Column $gap={7}>
        <Row>
          <SelectPair>
            <Select label="Font" value="Calibri" width={97} />
            <Select label="Font size" value="13,5" width={43} tight />
          </SelectPair>
          <ButtonGroup>
            <ToolButton aria-label="Grow font">
              <Glyph $size={17}>A</Glyph>
              <Superscript>
                <Arrow dir="up" size={5} />
              </Superscript>
            </ToolButton>
            <ToolButton aria-label="Shrink font">
              <Glyph $size={12}>A</Glyph>
              <Superscript>
                <Arrow dir="down" size={5} />
              </Superscript>
            </ToolButton>
          </ButtonGroup>
        </Row>
        <Row>
          <ButtonGroup>
            <ToolButton $on aria-label="Bold">
              <Glyph>B</Glyph>
            </ToolButton>
            <ToolButton $width={24} aria-label="Italic">
              <Glyph $italic>I</Glyph>
            </ToolButton>
            <ToolButton $width={32} aria-label="Underline">
              <Glyph $underline>U</Glyph>
              <Caret />
            </ToolButton>
          </ButtonGroup>
          <ButtonGroup>
            <ToolButton $width={32} aria-label="Borders">
              <BorderIcon />
              <Caret />
            </ToolButton>
          </ButtonGroup>
          <ButtonGroup>
            <ToolButton $width={32} aria-label="Fill color">
              <FillColorIcon />
              <Caret />
            </ToolButton>
            <ToolButton $width={32} aria-label="Font color">
              <FontColorIcon />
              <Caret />
            </ToolButton>
          </ButtonGroup>
        </Row>
      </Column>
    </Group>
    <Group title="Alignment" width={251} launcher $gap={3}>
      <Column $gap={7}>
        <Row>
          <ButtonGroup>
            <ToolButton aria-label="Top align">
              <LinesIcon kind="top" />
            </ToolButton>
            <ToolButton aria-label="Middle align">
              <LinesIcon kind="middle" />
            </ToolButton>
            <ToolButton $on aria-label="Bottom align">
              <LinesIcon kind="bottom" />
            </ToolButton>
          </ButtonGroup>
          <ButtonGroup>
            <ToolButton $width={30} aria-label="Orientation">
              <OrientationIcon />
              <Caret />
            </ToolButton>
          </ButtonGroup>
        </Row>
        <Row>
          <ButtonGroup>
            <ToolButton aria-label="Align left">
              <LinesIcon kind="left" />
            </ToolButton>
            <ToolButton $on aria-label="Center">
              <LinesIcon kind="center" />
            </ToolButton>
            <ToolButton aria-label="Align right">
              <LinesIcon kind="right" />
            </ToolButton>
          </ButtonGroup>
          <ButtonGroup>
            <ToolButton aria-label="Decrease indent">
              <LinesIcon kind="indent" shift="out" />
            </ToolButton>
            <ToolButton aria-label="Increase indent">
              <LinesIcon kind="indent" shift="in" />
            </ToolButton>
          </ButtonGroup>
        </Row>
      </Column>
      <Separator />
      <Column $gap={7}>
        <Row>
          <ToggleButton>
            <WrapIcon />
            Wrap Text
          </ToggleButton>
        </Row>
        <ToggleSplit>
          <ToggleButton>
            <MergeIcon />
            Merge &amp; Center
          </ToggleButton>
          <ToggleButton aria-label="Merge options">
            <Caret color="#8a6a35" />
          </ToggleButton>
        </ToggleSplit>
      </Column>
    </Group>
    <Group title="Number" width={136} launcher>
      <Column $gap={7}>
        <Select label="Number format" value="General" width={128} />
        <Row>
          <ButtonGroup>
            <ToolButton $width={33} aria-label="Accounting format">
              <MoneyIcon />
              <Caret />
            </ToolButton>
            <ToolButton aria-label="Percent style">
              <Percent>%</Percent>
            </ToolButton>
            <ToolButton $width={23} aria-label="Comma style">
              <Glyph $size={18}>,</Glyph>
            </ToolButton>
          </ButtonGroup>
          <ButtonGroup>
            <ToolButton aria-label="Increase decimal">
              <DecimalIcon />
            </ToolButton>
            <ToolButton aria-label="Decrease decimal">
              <DecimalIcon less />
            </ToolButton>
          </ButtonGroup>
        </Row>
      </Column>
    </Group>
    <Group title="Styles" width={174} $pad="0 3px">
      <Big icon={ConditionalIcon} lines={['Conditional', 'Formatting']} width={68} />
      <Big icon={FormatTableIcon} lines={['Format', 'as Table']} width={56} />
      <Big icon={CellStylesIcon} lines={['Cell', 'Styles']} width={42} />
    </Group>
    <Group title="Cells" width={134} $pad="0 2px">
      <Big icon={InsertCellsIcon} lines={['Insert']} width={42} caretBelow />
      <Big icon={DeleteCellsIcon} lines={['Delete']} width={42} caretBelow />
      <Big icon={FormatCellsIcon} lines={['Format']} width={42} caretBelow />
    </Group>
    <Group title="Editing" width={176} $pad="0 7px">
      <EditList>
        <Small icon={SigmaIcon} text="AutoSum" caret />
        <Small icon={FillIcon} text="Fill" caret />
        <Small icon={ClearIcon} text="Clear" caret />
      </EditList>
      <Big icon={SortIcon} lines={['Sort &', 'Filter']} width={42} />
      <Big icon={FindIcon} lines={['Find &', 'Select']} width={42} />
    </Group>
  </Ribbon>
);

const SheetRow = ({ row }) => {
  const merged = MERGED[row];
  const kelas = KELAS[row];
  return (
    <tr>
      <RowHead $height={row < 3 ? 24 : 20} $on={row === 1}>
        {row}
      </RowHead>
      {kelas &&
        kelas.map((text) => (
          <Cell key={text} $right $bottom $bold={row === 6}>
            {text}
          </Cell>
        ))}
      {!kelas && (
        <Cell
          colSpan={2}
          $size={merged?.size}
          $bold={merged?.bold}
          $align={merged?.align}
          $bottom={merged?.bottom}
          $dots={merged?.dots}
        >
          {merged?.text}
          {row === 1 && <Selection />}
        </Cell>
      )}
      <td colSpan={COLUMNS.length - 2} />
    </tr>
  );
};

const App = () => (
  <>
    <GlobalStyle />
    <Desktop>
      <TitleBar>
        <OfficeButton aria-label="Office Button">
          <OfficeLogo />
        </OfficeButton>
        <TitleSide>
          <QuickAccess>
            <QuickButton aria-label="Save">
              <SaveIcon />
            </QuickButton>
            <QuickButton $width={20} aria-label="Undo">
              <UndoIcon />
            </QuickButton>
            <QuickButton $width={5} aria-label="Undo list">
              <Caret color="#7f9cc4" />
            </QuickButton>
            <QuickButton $width={20} aria-label="Redo">
              <UndoIcon flip />
            </QuickButton>
            <QuickButton $width={5} aria-label="Redo list">
              <Caret color="#7f9cc4" />
            </QuickButton>
            <QuickButton $width={24} aria-label="Print preview">
              <PreviewIcon />
            </QuickButton>
          </QuickAccess>
          <QuickButton $height={25} aria-label="Customize toolbar">
            <MoreIcon />
          </QuickButton>
        </TitleSide>
        <WindowTitle>Data_Kelas  [Read-Only] - Microsoft Excel</WindowTitle>
        <TitleSide $end>
          <WindowButtons>
            <WindowButton aria-label="Minimize">
              <svg width="12" height="5" viewBox="0 0 12 5">
                <path d="M.5.5h11v4H.5z" fill="#fff" stroke="#4b5a69" />
              </svg>
            </WindowButton>
            <WindowButton aria-label="Restore">
              <svg width="12" height="12" viewBox="0 0 12 12">
                <path d="M3.500.5h8v8h-8z" fill="#fff" stroke="#4b5a69" />
                <path d="M.5 3.500h8v8h-8z" fill="#fff" stroke="#4b5a69" />
                <path d="M3.500 6.500h2v2h-2z" fill="#6a7f94" stroke="#4b5a69" />
              </svg>
            </WindowButton>
            <WindowButton $close aria-label="Close">
              <svg width="12" height="11" viewBox="0 0 12 11">
                <path d="M2 1.500l8 8M10 1.500l-8 8" stroke="#5a2a22" strokeWidth="4" />
                <path d="M2 1.500l8 8M10 1.500l-8 8" stroke="#fff" strokeWidth="2.500" />
              </svg>
            </WindowButton>
          </WindowButtons>
        </TitleSide>
      </TitleBar>

      <TabBar>
        {TABS.map((tab, index) => (
          <RibbonTab key={tab} $active={index === 0}>
            {tab}
          </RibbonTab>
        ))}
        <TabBarEnd>
          <IconButton aria-label="Help">
            <HelpIcon />
          </IconButton>
          <IconButton aria-label="Minimize workbook">
            <svg width="10" height="10" viewBox="0 0 10 10">
              <path d="M1 7h7v2H1z" fill="#6b7f99" />
            </svg>
          </IconButton>
          <IconButton aria-label="Restore workbook">
            <svg width="10" height="9" viewBox="0 0 10 9" fill="none" stroke="#6b7f99">
              <path d="M2.500 2V.500h7v4H8M.500 2.500h7v5h-7zM.500 3.500h7" />
            </svg>
          </IconButton>
          <IconButton aria-label="Close workbook">
            <svg width="10" height="9" viewBox="0 0 10 9">
              <path d="M1 .5l7 8M8 .5l-7 8" stroke="#6b7f99" strokeWidth="1.800" />
            </svg>
          </IconButton>
        </TabBarEnd>
      </TabBar>

      <RibbonGroups />

      <FormulaBar>
        <NameBox>
          <input aria-label="Name box" defaultValue="A1" />
          <button aria-label="Name list">
            <svg width="7" height="4" viewBox="0 0 7 4">
              <path d="M0 0h7L3.500 4z" fill="#000" />
            </svg>
          </button>
        </NameBox>
        <FxArea>
          <Knob />
          <FxButton aria-label="Insert function">
            f<small>x</small>
          </FxButton>
        </FxArea>
        <FormulaInput aria-label="Formula" defaultValue="SDN 1 Banua Kepayang" />
        <ExpandButton aria-label="Expand formula bar">
          <svg width="8" height="9" viewBox="0 0 8 9" fill="none" stroke="#111" strokeWidth="1.500">
            <path d="M1 1l3 2.500L7 1M1 5l3 2.500L7 5" />
          </svg>
        </ExpandButton>
      </FormulaBar>

      <SheetArea>
        <GridClip>
          <Grid>
            <colgroup>
              <Col $width={26} />
              <Col $width={326} />
              <Col $width={174} />
              {COLUMNS.slice(2).map((name) => (
                <Col key={name} $width={64} />
              ))}
            </colgroup>
            <thead>
              <tr>
                <CornerCell aria-label="Select all">
                  <svg width="16" height="16" viewBox="0 0 16 16">
                    <path d="M13 3v11H2z" fill="#e3edfa" />
                  </svg>
                </CornerCell>
                {COLUMNS.map((name) => (
                  <ColHead key={name} $on={name === 'A' || name === 'B'}>
                    {name}
                  </ColHead>
                ))}
              </tr>
            </thead>
            <tbody>
              {ROWS.map((row) => (
                <SheetRow key={row} row={row} />
              ))}
            </tbody>
          </Grid>
        </GridClip>
        <VScroll>
          <VSplit />
          <ScrollArrow aria-label="Scroll up">
            <Arrow dir="up" />
          </ScrollArrow>
          <Thumb $vertical $grow={440}>
            <svg width="8" height="7" viewBox="0 0 8 7">
              <path d="M0 .5h8M0 2.500h8M0 4.500h8M0 6.500h8" stroke="#7a8699" />
            </svg>
          </Thumb>
          <Track $grow={41} />
          <ScrollArrow aria-label="Scroll down">
            <Arrow dir="down" />
          </ScrollArrow>
        </VScroll>
      </SheetArea>

      <SheetTabs>
        <TabNav>
          <IconButton aria-label="First sheet">
            <Arrow dir="left" bar size={7} />
          </IconButton>
          <IconButton aria-label="Previous sheet">
            <Arrow dir="left" size={7} />
          </IconButton>
          <IconButton aria-label="Next sheet">
            <Arrow dir="right" size={7} />
          </IconButton>
          <IconButton aria-label="Last sheet">
            <Arrow dir="right" bar size={7} />
          </IconButton>
        </TabNav>
        <SheetTab>Data_Kelas</SheetTab>
        <IconButton aria-label="Insert worksheet">
          <svg width="48" height="15" viewBox="0 0 48 15">
            <path d="M0 0h14L2 15H0z" fill="#fff" />
            <path d="M3 15L14.500 0H46L35 15z" fill="#d3e3f8" stroke="#6f94c4" />
            <path d="M20 4.500h8v5.500l-2.500 2.500H20z" fill="#fff" stroke="#4d6ea8" />
            <path d="M17 1v7M13.500 4.500h7M14.500 2l5 5M19.500 2l-5 5" stroke="#e79a22" />
          </svg>
        </IconButton>
        <HScroll>
          <HSplit />
          <ScrollArrow $width={18} $height={15} aria-label="Scroll left">
            <Arrow dir="left" />
          </ScrollArrow>
          <Thumb $grow={420}>
            <svg width="7" height="6" viewBox="0 0 7 6">
              <path d="M.5 0v6M2.500 0v6M4.500 0v6M6.500 0v6" stroke="#7a8699" />
            </svg>
          </Thumb>
          <Track $grow={70} />
          <ScrollArrow $width={18} $height={15} aria-label="Scroll right">
            <Arrow dir="right" />
          </ScrollArrow>
          <HSplit />
        </HScroll>
      </SheetTabs>

      <StatusBar>
        <ReadyText>Ready</ReadyText>
        <ViewArea>
          <ViewButtons>
            <ViewButton $on aria-label="Normal">
              <svg width="13" height="10" viewBox="0 0 13 10">
                <path d="M.5.5h12v9H.5zM4.500.5v9M8.500.5v9M.5 3.500h12M.5 6.500h12" fill="#fff" stroke="#555" />
              </svg>
            </ViewButton>
            <ViewButton aria-label="Page layout">
              <svg width="12" height="11" viewBox="0 0 12 11">
                <path d="M.5.5h11v10H.5z" fill="#ccc" stroke="#555" />
                <path d="M3.500 2.500h5v6h-5zM4 4.500h4M4 6.500h4" fill="#fff" stroke="#555" />
              </svg>
            </ViewButton>
            <ViewButton aria-label="Page break preview">
              <svg width="13" height="11" viewBox="0 0 13 11">
                <path d="M.5.5h12v10H.5z" fill="#ccc" stroke="#555" />
                <path d="M2.500.5h3v6h-3zM7.500.5h4v6h-4z" fill="#fff" stroke="#555" />
              </svg>
            </ViewButton>
          </ViewButtons>
          <span>100%</span>
          <ZoomArea>
            <IconButton aria-label="Zoom out">
              <svg width="16" height="16" viewBox="0 0 16 16">
                <circle cx="8" cy="8" r="7" fill="#e6effb" stroke="#3c5c8c" />
                <path d="M4 8h8" stroke="#3c5c8c" strokeWidth="2.500" />
              </svg>
            </IconButton>
            <input type="range" aria-label="Zoom" min="10" max="190" defaultValue="100" />
            <IconButton aria-label="Zoom in">
              <svg width="16" height="16" viewBox="0 0 16 16">
                <circle cx="8" cy="8" r="7" fill="#e6effb" stroke="#3c5c8c" />
                <path d="M4 8h8M8 4v8" stroke="#3c5c8c" strokeWidth="2.500" />
              </svg>
            </IconButton>
          </ZoomArea>
        </ViewArea>
      </StatusBar>

      <Taskbar>
        <StartButton aria-label="Start">
          <StartOrb />
        </StartButton>
        <TaskList>
          {TASKS.map(({ name, icon: Icon, open, active, stacked }) => (
            <TaskButton key={name} aria-label={name} $open={open} $active={active} $stacked={stacked}>
              <Icon />
            </TaskButton>
          ))}
        </TaskList>
        <Tray>
          <Language>EN</Language>
          <IconButton aria-label="Hidden icons">
            <svg width="8" height="4" viewBox="0 0 8 4">
              <path d="M0 4h8L4 0z" fill="#fff" />
            </svg>
          </IconButton>
          <PowerIcon />
          <SignalIcon />
          <SpeakerIcon />
          <Clock>
            8:20
            <br />
            16/01/2018
          </Clock>
          <ShowDesktop aria-label="Show desktop" />
        </Tray>
      </Taskbar>
    </Desktop>
  </>
);

export default App;
